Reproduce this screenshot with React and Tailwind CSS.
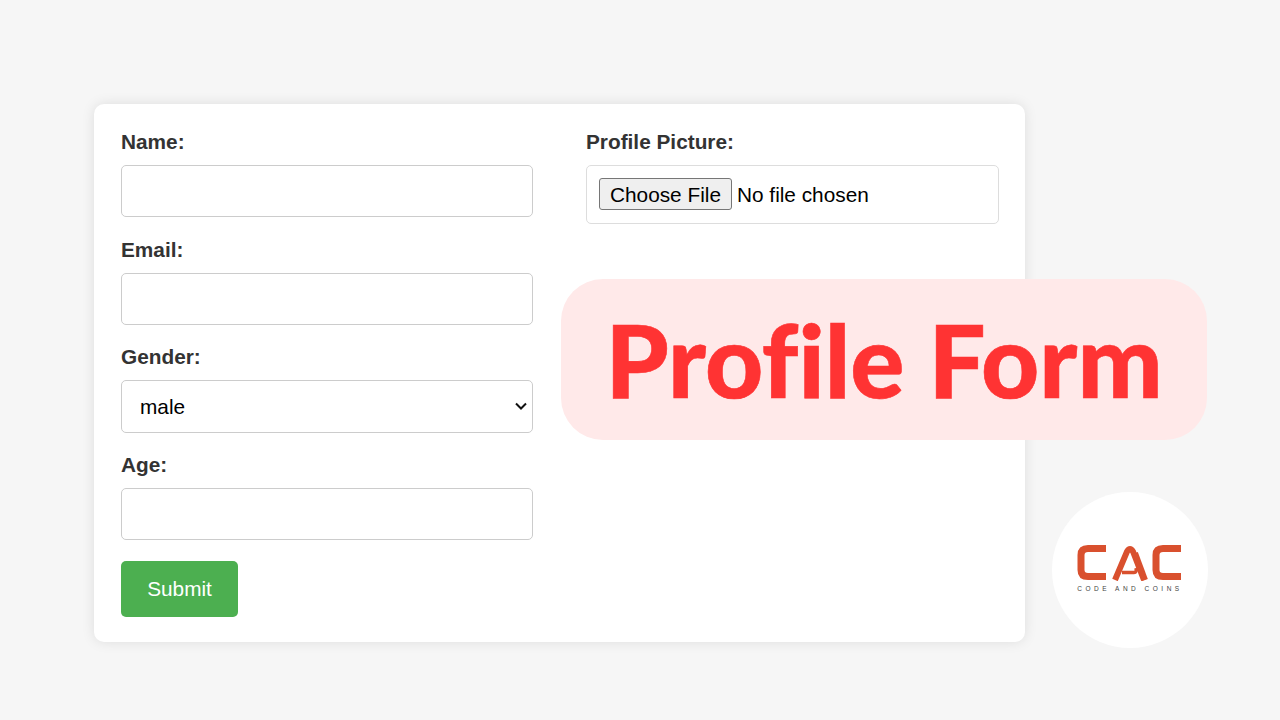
import React from 'react';

const labelClass = 'block mb-[11px] text-[20.8px] leading-[24px] font-bold text-[#333]';
const fieldClass = 'block w-full h-[52px] border border-[#ccc] rounded-[5px] bg-white';

const Field = ({ label, children }) => (
  <div className="mb-[20.6px]">
    <label className={labelClass}>{label}</label>
    {children}
  </div>
);

const CacLogo = () => (
  <div className="flex flex-col items-center pb-[4px]">
    <svg width="106" height="37" viewBox="0 0 106 37" fill="none" stroke="#d9502e" strokeWidth="7">
      <path d="M29 4.5H11Q4 4.5 4 11V26Q4 32.5 11 32.5H29" />
      <path d="M38 36L50 7.5Q53 2.5 56 7.5L67 36" strokeWidth="6" />
      <path d="M58 9L68 36" strokeWidth="6" />
      <path d="M45 28.5H57Q60 28.5 59 24" strokeWidth="3.5" />
      <path d="M104 4.5H86Q79 4.5 79 11V26Q79 32.5 86 32.5H104" />
    </svg>
    <span className="mt-[4px] text-[6.5px] leading-[7px] tracking-[3.5px] text-[#444] whitespace-nowrap font-['Liberation_Sans',sans-serif]">
      CODE AND COINS
    </span>
  </div>
);

export default function App() {
  return (
    <div className="relative w-[1280px] h-[720px] overflow-hidden bg-[#f6f6f6] pt-[104px] pl-[94px] font-['Liberation_Sans',Arial,sans-serif]">
      <form className="w-[931px] h-[538px] bg-white rounded-[10px] shadow-[0_0_13px_rgba(0,0,0,0.1)] pt-[26px] pl-[27px] grid grid-cols-[412px_413px] gap-x-[53px] items-start">
        <div>
          <Field label="Name:">
            <input type="text" className={fieldClass} />
          </Field>
          <Field label="Email:">
            <input type="email" className={fieldClass} />
          </Field>
          <Field label="Gender:">
            <div className="relative">
              <select defaultValue="male" className="block w-full h-[52.5px] appearance-none border border-[#ccc] rounded-[5px] bg-white pl-[18px] pr-[8px] text-[20.8px] text-black">
                <option value="male">male</option>
                <option value="female">female</option>
              </select>
              <svg className="absolute right-[6px] top-[22px] pointer-events-none" width="12" height="9" viewBox="0 0 12 9" fill="none" stroke="#111" strokeWidth="2">
                <path d="M1 1.5L6 6.5L11 1.5" />
              </svg>
            </div>
          </Field>
          <Field label="Age:">
            <input type="number" className={fieldClass} />
          </Field>
          <button type="button" className="block w-[117px] h-[56px] bg-[#4caf50] rounded-[5px] text-white text-[20.8px]">
            Submit
          </button>
        </div>
        <div>
          <label className={labelClass}>Profile Picture:</label>
          <input
            type="file"
            className="block w-full h-[59px] border border-[#ddd] rounded-[5px] bg-white px-[12px] py-[12px] text-[20.8px] leading-[32px] text-black file:h-[32px] file:mr-[5px] file:px-[10px] file:bg-[#efefef] file:border file:border-[#767676] file:rounded-[3px] file:text-[20.8px] file:text-black"
          />
        </div>
      </form>

      <div className="absolute left-[561px] top-[279px] w-[646px] h-[161px] rounded-[42px] bg-[#ffe9e9] flex items-center justify-center">
        <span className="text-[101px] leading-none font-black text-[#ff3333] whitespace-nowrap [font-variant-ligatures:none] [-webkit-text-stroke:0.6px_#ff3333] font-['Lato',sans-serif]">
          Profile Form
        </span>
      </div>

      <div className="absolute left-[1052px] top-[492px] w-[156px] h-[156px] rounded-full bg-white flex items-center justify-center">
        <CacLogo />
      </div>
    </div>
  );
}
